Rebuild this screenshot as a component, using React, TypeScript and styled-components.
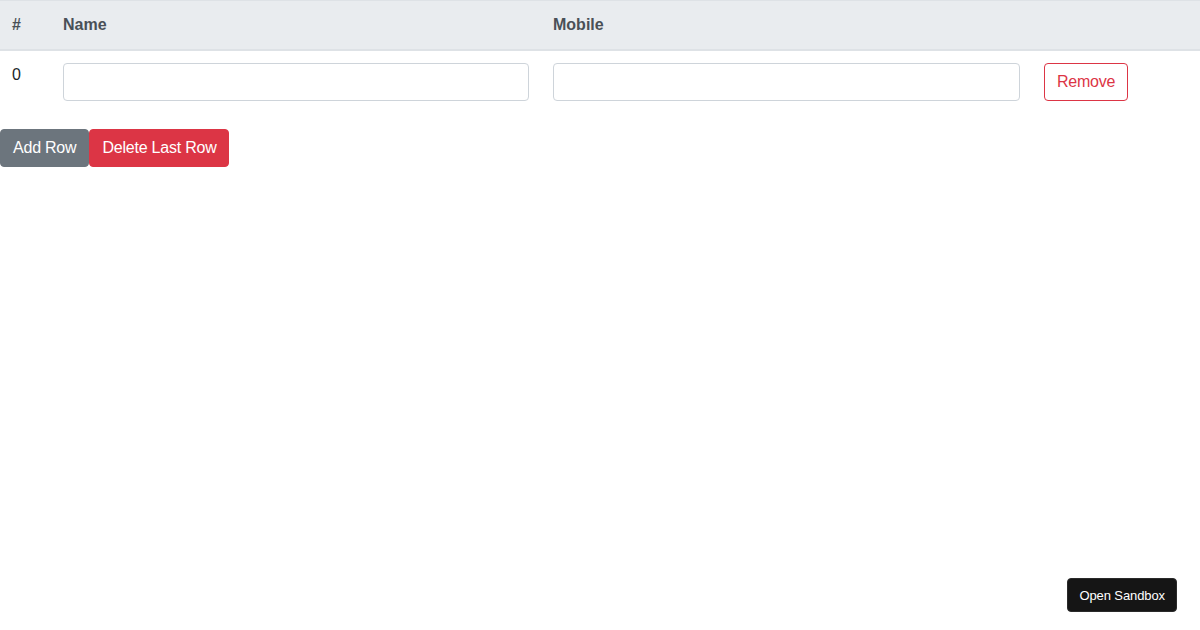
import React, { useState } from "react";
import styled, { createGlobalStyle } from "styled-components";

const GlobalStyle = createGlobalStyle`
  *, *::before, *::after { box-sizing: border-box; }
  html, body { margin: 0; padding: 0; background: #fff; }
  body {
    font-family: "Liberation Sans", Arial, sans-serif;
    font-size: 16px;
    line-height: 1.5;
    color: #212529;
  }
`;

const Table = styled.table`
  width: 100%;
  margin-bottom: 16px;
  border-collapse: collapse;
  table-layout: fixed;
  color: #212529;
`;

const HeadCell = styled.th`
  padding: 12px;
  text-align: left;
  font-weight: 700;
  color: #495057;
  background: #e9ecef;
  border-top: 1px solid #dee2e6;
  border-bottom: 2px solid #dee2e6;
  vertical-align: bottom;
  line-height: 24px;
`;

const Cell = styled.td`
  padding: 12px;
  vertical-align: top;
  line-height: 24px;
`;

const TextInput = styled.input`
  display: block;
  width: 100%;
  height: 38px;
  padding: 6px 12px;
  font: inherit;
  color: #495057;
  background: #fff;
  border: 1px solid #ced4da;
  border-radius: 4px;
  outline: none;
`;

const Button = styled.button<{ $variant: "secondary" | "danger" | "outline-danger" }>`
  display: inline-block;
  height: 38px;
  padding: 6px 12px;
  font-family: "Liberation Sans", Arial, sans-serif;
  font-size: 16px;
  line-height: 24px;
  letter-spacing: -0.22px;
  border-radius: 4px;
  cursor: pointer;
  border: 1px solid
    ${(p) => (p.$variant === "secondary" ? "#6c757d" : "#dc3545")};
  background: ${(p) =>
    p.$variant === "secondary"
      ? "#6c757d"
      : p.$variant === "danger"
      ? "#dc3545"
      : "transparent"};
  color: ${(p) => (p.$variant === "outline-danger" ? "#dc3545" : "#fff")};
`;

const ButtonRow = styled.div`
  display: flex;
`;

const SandboxButton = styled.button`
  position: fixed;
  right: 23px;
  bottom: 18px;
  height: 34px;
  padding: 0 11px;
  background: #151515;
  color: #fff;
  border: 1px solid #2a2a2a;
  border-radius: 4px;
  font-family: "Liberation Sans", Arial, sans-serif;
  font-size: 13px;
  letter-spacing: -0.1px;
`;

type Row = { name: string; mobile: string };

export default function App() {
  const [rows, setRows] = useState<Row[]>([{ name: "", mobile: "" }]);

  const update = (i: number, key: keyof Row, v: string) =>
    setRows((r) => r.map((row, j) => (j === i ? { ...row, [key]: v } : row)));

  return (
    <>
      <GlobalStyle />
      <Table>
        <colgroup>
          <col style={{ width: 51 }} />
          <col style={{ width: 490 }} />
          <col style={{ width: 491 }} />
          <col />
        </colgroup>
        <thead>
          <tr>
            <HeadCell>#</HeadCell>
            <HeadCell>Name</HeadCell>
            <HeadCell>Mobile</HeadCell>
            <HeadCell></HeadCell>
          </tr>
        </thead>
        <tbody>
          {rows.map((row, i) => (
            <tr key={i}>
              <Cell>{i}</Cell>
              <Cell>
                <TextInput
                  value={row.name}
                  onChange={(e) => update(i, "name", e.target.value)}
                />
              </Cell>
              <Cell>
                <TextInput
                  value={row.mobile}
                  onChange={(e) => update(i, "mobile", e.target.value)}
                />
              </Cell>
              <Cell>
                <Button
                  $variant="outline-danger"
                  onClick={() => setRows((r) => r.filter((_, j) => j !== i))}
                >
                  Remove
                </Button>
              </Cell>
            </tr>
          ))}
        </tbody>
      </Table>
      <ButtonRow>
        <Button
          $variant="secondary"
          onClick={() => setRows((r) => [...r, { name: "", mobile: "" }])}
        >
          Add Row
        </Button>
        <Button $variant="danger" onClick={() => setRows((r) => r.slice(0, -1))}>
          Delete Last Row
        </Button>
      </ButtonRow>
      <SandboxButton>Open Sandbox</SandboxButton>
    </>
  );
}
